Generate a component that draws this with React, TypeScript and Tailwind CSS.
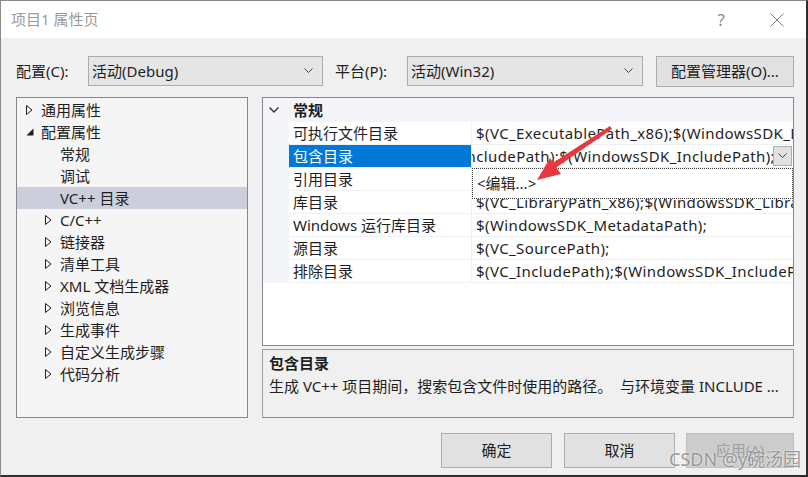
import React from 'react';

const font = "font-['Noto_Sans','Noto_Sans_CJK_SC',sans-serif]";

const Chevron = ({ className = '' }: { className?: string }) => (
  <svg width="9" height="6" viewBox="0 0 9 6" className={className}>
    <path d="M0.5 0.5 L4.5 4.5 L8.5 0.5" fill="none" stroke="#444" strokeWidth="1" />
  </svg>
);

const TreeArrow = ({ open }: { open?: boolean }) =>
  open ? (
    <svg width="8" height="8" viewBox="0 0 8 8">
      <path d="M7.5 0.5 L7.5 7.5 L0.5 7.5 Z" fill="#1e1e1e" />
    </svg>
  ) : (
    <svg width="7" height="10" viewBox="0 0 7 10">
      <path d="M0.5 0.5 L6 5 L0.5 9.5 Z" fill="none" stroke="#1e1e1e" strokeWidth="1" />
    </svg>
  );

interface TreeItem {
  label: string;
  level: 0 | 1;
  arrow?: 'open' | 'closed';
  selected?: boolean;
}

const tree: TreeItem[] = [
  { label: '通用属性', level: 0, arrow: 'closed' },
  { label: '配置属性', level: 0, arrow: 'open' },
  { label: '常规', level: 1 },
  { label: '调试', level: 1 },
  { label: 'VC++ 目录', level: 1, selected: true },
  { label: 'C/C++', level: 1, arrow: 'closed' },
  { label: '链接器', level: 1, arrow: 'closed' },
  { label: '清单工具', level: 1, arrow: 'closed' },
  { label: 'XML 文档生成器', level: 1, arrow: 'closed' },
  { label: '浏览信息', level: 1, arrow: 'closed' },
  { label: '生成事件', level: 1, arrow: 'closed' },
  { label: '自定义生成步骤', level: 1, arrow: 'closed' },
  { label: '代码分析', level: 1, arrow: 'closed' },
];

const props = [
  { name: '可执行文件目录', value: '$(VC_ExecutablePath_x86);$(WindowsSDK_ExecutablePath);$(WindowsSDK_ExecutablePath_x86)' },
  { name: '包含目录', value: 'IncludePath);$(WindowsSDK_IncludePath);', selected: true },
  { name: '引用目录', value: '$(VC_ReferencesPath_x86);' },
  { name: '库目录', value: '$(VC_LibraryPath_x86);$(WindowsSDK_LibraryPath_x86)' },
  { name: 'Windows 运行库目录', value: '$(WindowsSDK_MetadataPath);' },
  { name: '源目录', value: '$(VC_SourcePath);' },
  { name: '排除目录', value: '$(VC_IncludePath);$(WindowsSDK_IncludePath);$(MSBuild_ExecutablePath)' },
];

const Combo = ({ text, width }: { text: string; width: string }) => (
  <div className={`${width} shrink-0 h-[30px] flex items-center bg-[#e5e5e5] border border-[#acacac] pl-[3px] pr-[9px]`}>
    <span className="flex-1 text-[15px] leading-[20px] text-[#1e1e1e]">{text}</span>
    <Chevron />
  </div>
);

const Button = ({ text, width, disabled }: { text: string; width: string; disabled?: boolean }) => (
  <div
    className={`${width} shrink-0 h-[35px] flex items-center justify-center border text-[15px] ${
      disabled ? 'bg-[#cccccc] border-[#bfbfbf] text-[#a0a0a0]' : 'bg-[#e1e1e1] border-[#adadad] text-[#1e1e1e]'
    }`}
  >
    {text}
  </div>
);

export default function App() {
  return (
    <div
      className={`${font} relative w-[808px] h-[477px] overflow-hidden flex flex-col bg-[#f0f0f0] border-l border-t border-[#8a8a8a] border-r-2 border-b-2 border-r-[#2e2e2e] border-b-[#2e2e2e]`}
    >
      {/* title bar */}
      <div className="h-[37px] shrink-0 bg-white flex items-center pl-[10px] pr-[22px]">
        <span className="flex-1 text-[15px] text-[#999999]">项目1 属性页</span>
        <span className="text-[17px] text-[#8a8a8a] mr-[45px]">?</span>
        <svg width="14" height="14" viewBox="0 0 14 14">
          <path d="M0.5 0.5 L13.5 13.5 M13.5 0.5 L0.5 13.5" stroke="#7a7a7a" strokeWidth="1" />
        </svg>
      </div>

      <div className="flex-1 flex flex-col pl-[15px] pr-[12px] pt-[18px]">
        {/* config row */}
        <div className="flex items-center h-[30px]">
          <span className="w-[72px] shrink-0 text-[15px] text-[#1e1e1e]">配置(C):</span>
          <Combo text="活动(Debug)" width="w-[235px]" />
          <span className="ml-[12px] w-[72px] shrink-0 text-[15px] text-[#1e1e1e]">平台(P):</span>
          <Combo text="活动(Win32)" width="w-[236px]" />
          <div className="ml-[13px] w-[138px] shrink-0 h-[31px] flex items-center justify-center bg-[#e1e1e1] border border-[#adadad] text-[15px] text-[#1e1e1e]">
            配置管理器(O)...
          </div>
        </div>

        <div className="flex mt-[11px] h-[321px]">
          {/* tree */}
          <div className="w-[232px] shrink-0 h-full bg-[#f5f5f5] border border-[#828790] pt-px">
            {tree.map((item) => (
              <div
                key={item.label}
                className={`h-[22px] flex items-center text-[15px] text-[#1e1e1e] whitespace-nowrap ${
                  item.level === 0 ? 'pl-[9px]' : 'pl-[28px]'
                } ${item.selected ? 'bg-[#cccedb]' : ''}`}
              >
                <span className="w-[15px] shrink-0 flex items-center">
                  {item.arrow && <TreeArrow open={item.arrow === 'open'} />}
                </span>
                <span className="leading-[20px]">{item.label}</span>
              </div>
            ))}
          </div>

          <div className="ml-[14px] w-[532px] shrink-0 min-w-0 flex flex-col">
            {/* property grid */}
            <div className="relative h-[249px] bg-white border border-[#828790] flex flex-col overflow-hidden">
              <div className="h-[24px] shrink-0 flex items-center bg-[#f4f5f8] text-[15px] font-bold text-[#1e1e1e]">
                <span className="w-[22px] flex justify-center">
                  <svg width="10" height="6" viewBox="0 0 10 6">
                    <path d="M0.5 0.5 L5 5 L9.5 0.5" fill="none" stroke="#333" strokeWidth="1.4" />
                  </svg>
                </span>
                <span className="pl-[8px]">常规</span>
              </div>
              {props.map((p) => (
                <div key={p.name} className="h-[23px] shrink-0 flex text-[15px]">
                  <div className="w-[26px] shrink-0 bg-[#f4f5f8]" />
                  <div
                    className={`w-[183px] shrink-0 pl-[4px] flex items-center whitespace-nowrap border-b border-r border-[#edf0f5] ${
                      p.selected ? 'bg-[#0078d7] text-white' : 'text-[#1e1e1e]'
                    }`}
                  >
                    {p.name}
                  </div>
                  <div className="flex-1 min-w-0 flex items-center border-b border-[#edf0f5] overflow-hidden tracking-[0.4px]">
                    {p.selected ? (
                      <>
                        <span className="flex-1 min-w-0 overflow-hidden whitespace-nowrap">
                          <span className="ml-[-11px] text-[#1e1e1e]">{p.value}</span>
                        </span>
                        <div className="w-[19px] shrink-0 h-[20px] mr-px flex items-center justify-center bg-[#e1e1e1] border border-[#adadad]">
                          <Chevron />
                        </div>
                      </>
                    ) : (
                      <span className="pl-[4px] whitespace-nowrap text-[#1e1e1e]">{p.value}</span>
                    )}
                  </div>
                </div>
              ))}
              {/* dropdown */}
              <div className="absolute left-[209px] top-[70px] w-[321px] h-[31px] bg-white border border-dotted border-[#333] flex items-center pl-[4px] text-[15px] text-[#1e1e1e]">
                &lt;编辑...&gt;
              </div>
            </div>

            {/* description */}
            <div className="mt-[3px] h-[69px] bg-[#f0f0f0] border border-[#a0a0a0] border-b-[#8a8a8a] px-[6px] pt-[2px] text-[15px] text-[#1e1e1e] overflow-hidden">
              <div className="font-bold leading-[23px]">包含目录</div>
              <div className="leading-[23px] whitespace-nowrap">生成 VC++ 项目期间，搜索包含文件时使用的路径。&nbsp;&nbsp;与环境变量 INCLUDE ...</div>
            </div>
          </div>
        </div>

        {/* buttons */}
        <div className="flex justify-end mt-[15px]">
          <Button text="确定" width="w-[111px]" />
          <div className="w-[12px] shrink-0" />
          <Button text="取消" width="w-[111px]" />
          <div className="w-[11px] shrink-0" />
          <Button text="应用(A)" width="w-[108px]" disabled />
        </div>
      </div>

      {/* annotation arrow */}
      <svg className="absolute left-0 top-0 pointer-events-none" width="808" height="477" viewBox="0 0 808 477">
        <path d="M609 125 L611 128 L553 168 L550 163 Z" fill="#e8373d" />
        <path d="M536 179 L549 157 L560 173 Z" fill="#e8373d" />
      </svg>

      {/* watermark */}
      <span className="absolute left-[668px] top-[448px] text-[18px] leading-[20px] text-[#7f7f7f]/80 [text-shadow:0_0_2px_#fff]">
        CSDN @y碗汤园
      </span>
    </div>
  );
}
